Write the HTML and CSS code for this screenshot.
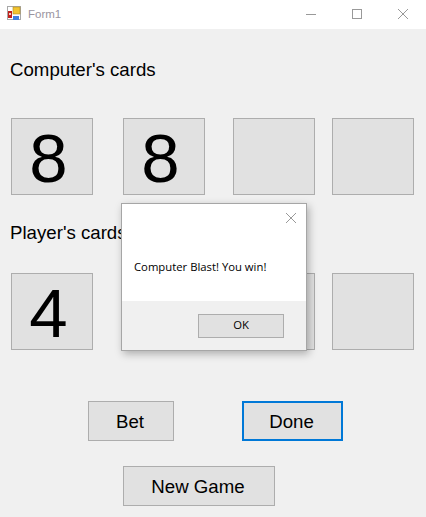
FILE: index.html
```html
<!DOCTYPE html>
<html lang="en">
<head>
<meta charset="utf-8">
<title>Form1</title>
<link rel="stylesheet" href="styles.css">
</head>
<body>
<div class="window">
  <header class="titlebar">
    <svg class="app-icon" width="16" height="16" viewBox="0 0 16 16">
      <rect x="0.5" y="0.5" width="13" height="13" fill="#fff" stroke="#a8a8a8"/>
      <rect x="1" y="5" width="4" height="7" fill="#c0201c"/>
      <rect x="2" y="7" width="2" height="2" fill="#f0d0c0"/>
      <rect x="6" y="1" width="7" height="7" fill="#f2c430" stroke="#b08a20" stroke-width="0.6"/>
      <rect x="6" y="10" width="6" height="4" fill="#3f7fe0"/>
      <rect x="2" y="13" width="3" height="1" fill="#a8a8a8"/>
    </svg>
    <span class="title">Form1</span>
    <div class="caption-buttons">
      <svg class="caption" width="12" height="12" viewBox="0 0 12 12"><path d="M1 6.5H11" stroke="#999" fill="none"/></svg>
      <svg class="caption" width="12" height="12" viewBox="0 0 12 12"><rect x="1.5" y="1.5" width="9" height="9" stroke="#999" fill="none"/></svg>
      <svg class="caption" width="12" height="12" viewBox="0 0 12 12"><path d="M1 1L11 11M11 1L1 11" stroke="#999" fill="none"/></svg>
    </div>
  </header>
  <main class="form">
    <h2 class="label label-computer">Computer's cards</h2>
    <div class="cards">
      <div class="card">8</div>
      <div class="card">8</div>
      <div class="card"></div>
      <div class="card"></div>
    </div>
    <h2 class="label label-player">Player's cards</h2>
    <div class="cards">
      <div class="card">4</div>
      <div class="card"></div>
      <div class="card"></div>
      <div class="card"></div>
    </div>
    <div class="actions">
      <button class="btn btn-bet">Bet</button>
      <button class="btn btn-done">Done</button>
    </div>
    <button class="btn btn-new">New Game</button>
  </main>
  <div class="dialog">
    <div class="dialog-body">
      <svg class="dialog-close" width="12" height="12" viewBox="0 0 12 12"><path d="M1 1L11 11M11 1L1 11" stroke="#999" fill="none"/></svg>
      <p class="dialog-text">Computer Blast! You win!</p>
    </div>
    <div class="dialog-footer">
      <button class="btn-ok">OK</button>
    </div>
  </div>
</div>
</body>
</html>
```
FILE: styles.css
```css
* { box-sizing: border-box; }
html, body { margin: 0; padding: 0; }
body {
  width: 426px;
  height: 517px;
  overflow: hidden;
  font-family: "Liberation Sans", Arial, sans-serif;
  color: #000;
}
.window {
  position: relative;
  width: 426px;
  height: 517px;
  background: #f0f0f0;
}
.titlebar {
  display: flex;
  align-items: center;
  height: 29px;
  background: #fff;
  padding-left: 7px;
}
.app-icon { flex: none; margin-bottom: 2px; }
.title {
  margin-left: 5px;
  font-size: 11.5px;
  color: #9a94a0;
  margin-bottom: 1px;
}
.caption-buttons {
  display: flex;
  margin-left: auto;
  margin-right: 17px;
  gap: 34px;
  margin-bottom: 2px;
}
.form { padding: 0 0 0 10px; }
.label {
  margin: 0;
  font-size: 18.67px;
  font-weight: 400;
  line-height: 20px;
}
.label-computer { padding-top: 31px; }
.label-player { padding-top: 28px; }
.cards {
  display: flex;
  margin-left: 1px;
  margin-top: 30px;
}
.label-computer + .cards { margin-top: 38px; }
.card {
  flex: none;
  width: 82px;
  height: 77px;
  margin-right: 30px;
  padding-right: 7px;
  background: #e1e1e1;
  border: 1px solid #adadad;
  font-size: 69px;
  line-height: 80px;
  text-align: center;
}
.card:nth-child(2) { margin-right: 28px; }
.card:nth-child(3) { margin-right: 17px; }
.actions {
  display: flex;
  margin: 51px 0 0 78px;
  gap: 68px;
}
.btn {
  display: block;
  padding: 2px 2px 0 0;
  height: 40px;
  background: #e1e1e1;
  border: 1px solid #adadad;
  border-radius: 0;
  font-family: inherit;
  font-size: 18.67px;
  color: #000;
}
.btn-bet { width: 86px; }
.btn-done { width: 101px; border: 2px solid #0078d7; }
.btn-new { width: 152px; margin: 25px 0 0 113px; }
.dialog {
  position: absolute;
  left: 121px;
  top: 203px;
  width: 186px;
  height: 148px;
  background: #f0f0f0;
  border: 1px solid #a6a6a6;
  box-shadow: 2px 3px 8px rgba(0, 0, 0, 0.28);
}
.dialog-body {
  position: relative;
  height: 97px;
  background: #fff;
  padding: 55px 0 0 12px;
}
.dialog-close { position: absolute; top: 8px; right: 9px; }
.dialog-text { margin: 0; font-size: 11.3px; line-height: 16px; font-family: "Open Sans", "Noto Sans", sans-serif; }
.dialog-footer { display: flex; justify-content: flex-end; padding: 13px 22px 0 0; }
.btn-ok {
  width: 86px;
  height: 24px;
  padding: 0 0 3px;
  background: #e1e1e1;
  border: 1px solid #adadad;
  font-family: "Open Sans", "Noto Sans", sans-serif;
  font-size: 11.3px;
  color: #000;
}
```
